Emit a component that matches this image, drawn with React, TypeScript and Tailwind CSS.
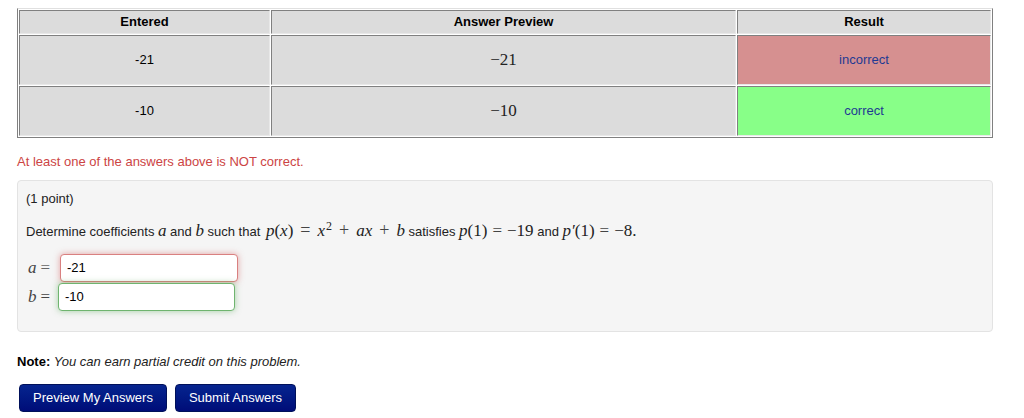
import React from "react";

const sans = { fontFamily: '"Liberation Sans", Arial, sans-serif' };

const M = ({ children }: { children: React.ReactNode }) => (
  <span className="font-['Liberation_Serif',serif] text-[17px] italic">{children}</span>
);
const R = ({ children }: { children: React.ReactNode }) => (
  <span className="font-['Liberation_Serif',serif] text-[17px] not-italic">{children}</span>
);
const Op = ({ children }: { children: React.ReactNode }) => (
  <span className="mx-[5px] font-['Liberation_Serif',serif] text-[17px] text-[#444]">{children}</span>
);
const WideOp = ({ children }: { children: React.ReactNode }) => (
  <span className="mx-[7px] font-['Liberation_Serif',serif] text-[18px] text-[#444]">{children}</span>
);

const cell =
  "border border-t-[#808080] border-l-[#808080] border-b-[#e8e8e8] border-r-[#e8e8e8] text-center align-middle";

export default function App() {
  return (
    <div className="w-[1024px] h-[418px] bg-white px-[17px] pt-[8px] text-[13px] text-[#222]" style={sans}>
      <table className="w-[976px] border-separate border-spacing-[1px] border border-t-[#e0e0e0] border-l-[#808080] border-b-[#808080] border-r-[#808080] bg-white">
        <thead>
          <tr className="h-[24px]">
            <th className={`${cell} w-[251px] bg-[#dcdcdc] font-bold text-black`}>Entered</th>
            <th className={`${cell} w-[465px] bg-[#dcdcdc] font-bold text-black`}>Answer Preview</th>
            <th className={`${cell} bg-[#dcdcdc] font-bold text-black`}>Result</th>
          </tr>
        </thead>
        <tbody>
          <tr className="h-[50px]">
            <td className={`${cell} bg-[#dcdcdc] text-black`}>-21</td>
            <td className={`${cell} bg-[#dcdcdc] text-[#222]`}>
              <R>−21</R>
            </td>
            <td className={`${cell} bg-[#d69090] text-[#1f3a93]`}>incorrect</td>
          </tr>
          <tr className="h-[50px]">
            <td className={`${cell} bg-[#dcdcdc] text-black`}>-10</td>
            <td className={`${cell} bg-[#dcdcdc] text-[#222]`}>
              <R>−10</R>
            </td>
            <td className={`${cell} bg-[#88ff88] text-[#1f3a93]`}>correct</td>
          </tr>
        </tbody>
      </table>

      <p className="mt-[15px] leading-[18px] text-[#cc4444]">At least one of the answers above is NOT correct.</p>

      <div className="mt-[9px] h-[152px] w-[976px] rounded-[4px] border border-[#e3e3e3] bg-[#f5f5f5] px-[8px] pt-[9px]">
        <p className="leading-[18px]">(1 point)</p>
        <p className="mt-[12px] leading-[20px]">
          Determine coefficients <M>a</M> and <M>b</M> such that{" "}
          <span className="ml-[2px]" />
          <M>p</M>
          <R>(</R>
          <M>x</M>
          <R>)</R>
          <WideOp>=</WideOp>
          <M>x</M>
          <sup className="ml-[1px] font-['Liberation_Serif',serif] text-[12px]">2</sup>
          <WideOp>+</WideOp>
          <M>ax</M>
          <WideOp>+</WideOp>
          <M>b</M> satisfies <M>p</M>
          <R>(1)</R>
          <Op>=</Op>
          <R>−19</R> and <M>p′</M>
          <R>(1)</R>
          <Op>=</Op>
          <R>−8.</R>
        </p>
        <div className="mt-[12px] flex flex-col gap-[1px]">
          <div className="flex items-center">
            <span className="w-[34px] pl-[2px] text-[#444]">
              <M>a</M>
              <span className="ml-[4px] font-['Liberation_Serif',serif] text-[17px] text-[#666]">=</span>
            </span>
            <div className="flex h-[28px] w-[178px] items-center rounded-[4px] border border-[#d98080] bg-white px-[6px] text-black shadow-[0_0_6px_rgba(210,80,80,0.5)]">
              -21
            </div>
          </div>
          <div className="flex items-center">
            <span className="w-[32px] pl-[2px] text-[#444]">
              <M>b</M>
              <span className="ml-[4px] font-['Liberation_Serif',serif] text-[17px] text-[#444]">=</span>
            </span>
            <div className="flex h-[28px] w-[177px] items-center rounded-[4px] border border-[#6fb46f] bg-white px-[6px] text-black shadow-[0_0_6px_rgba(80,170,80,0.5)]">
              -10
            </div>
          </div>
        </div>
      </div>

      <p className="mt-[21px] leading-[18px] text-black">
        <span className="font-bold">Note:</span> <em className="text-[#222]">You can earn partial credit on this problem.</em>
      </p>

      <div className="mt-[13px] flex gap-[8px] pl-[2px]">
        <button className="h-[28px] rounded-[4px] border border-[#00105a] bg-gradient-to-b from-[#06248f] to-[#000c78] px-[13px] text-[13px] text-white" style={sans}>
          Preview My Answers
        </button>
        <button className="h-[28px] rounded-[4px] border border-[#00105a] bg-gradient-to-b from-[#06248f] to-[#000c78] px-[13px] text-[13px] text-white" style={sans}>
          Submit Answers
        </button>
      </div>
    </div>
  );
}
